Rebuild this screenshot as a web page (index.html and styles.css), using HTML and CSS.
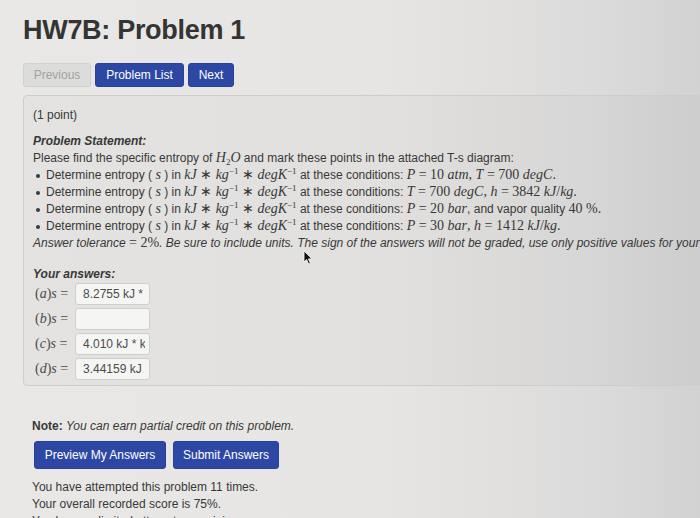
FILE: index.html
```html
<!DOCTYPE html>
<html>
<head>
<meta charset="utf-8">
<title>HW7B: Problem 1</title>
<link rel="stylesheet" href="styles.css">
</head>
<body>
<div class="page">
  <h1 class="title">HW7B: Problem 1</h1>
  <div class="nav">
    <span class="btn btn-disabled">Previous</span>
    <span class="btn btn-primary">Problem List</span>
    <span class="btn btn-primary">Next</span>
  </div>

  <div class="problem">
    <div class="points">(1 point)</div>
    <div class="stmt-head">Problem Statement:</div>
    <div class="line">Please find the specific entropy of <span class="m"><i>H</i><sub>2</sub><i>O</i></span> and mark these points in the attached T-s diagram:</div>
    <ul class="bullets">
      <li>Determine entropy ( <span class="m"><i>s</i></span> ) in <span class="m"><i>kJ</i> ∗ <i>kg</i><sup>−1</sup> ∗ <i>degK</i><sup>−1</sup></span> at these conditions: <span class="m"><i>P</i> = 10 <i>atm</i>, <i>T</i> = 700 <i>degC</i>.</span></li>
      <li>Determine entropy ( <span class="m"><i>s</i></span> ) in <span class="m"><i>kJ</i> ∗ <i>kg</i><sup>−1</sup> ∗ <i>degK</i><sup>−1</sup></span> at these conditions: <span class="m"><i>T</i> = 700 <i>degC</i>, <i>h</i> = 3842 <i>kJ</i>/<i>kg</i>.</span></li>
      <li>Determine entropy ( <span class="m"><i>s</i></span> ) in <span class="m"><i>kJ</i> ∗ <i>kg</i><sup>−1</sup> ∗ <i>degK</i><sup>−1</sup></span> at these conditions: <span class="m"><i>P</i> = 20 <i>bar</i></span>, and vapor quality <span class="m">40 %.</span></li>
      <li>Determine entropy ( <span class="m"><i>s</i></span> ) in <span class="m"><i>kJ</i> ∗ <i>kg</i><sup>−1</sup> ∗ <i>degK</i><sup>−1</sup></span> at these conditions: <span class="m"><i>P</i> = 30 <i>bar</i>, <i>h</i> = 1412 <i>kJ</i>/<i>kg</i>.</span></li>
    </ul>
    <div class="line tol"><em>Answer tolerance</em> <span class="m">= 2%</span><em>. Be sure to include units. The sign of the answers will not be graded, use only positive values for your answers.</em></div>

    <div class="answers-head">Your answers:</div>
    <div class="answers">
      <div class="ans-row"><span class="lbl m">(<i>a</i>)<i>s</i> =</span><input class="ans" type="text" readonly value="8.2755 kJ * kg^-1 * degK^-1"></div>
      <div class="ans-row"><span class="lbl m">(<i>b</i>)<i>s</i> =</span><input class="ans" type="text" readonly value=""></div>
      <div class="ans-row"><span class="lbl m">(<i>c</i>)<i>s</i> =</span><input class="ans" type="text" readonly value="4.010 kJ * kg^-1 * degK^-1"></div>
      <div class="ans-row"><span class="lbl m">(<i>d</i>)<i>s</i> =</span><input class="ans" type="text" readonly value="3.44159 kJ * kg^-1 * degK^-1"></div>
    </div>
  </div>

  <div class="footer">
    <div class="note"><b>Note:</b> <em>You can earn partial credit on this problem.</em></div>
    <div class="actions">
      <span class="btn btn-primary btn-lg">Preview My Answers</span>
      <span class="btn btn-primary btn-lg">Submit Answers</span>
    </div>
    <div class="status">
      <div>You have attempted this problem 11 times.</div>
      <div>Your overall recorded score is 75%.</div>
      <div>You have unlimited attempts remaining.</div>
    </div>
  </div>
</div>

<svg class="cursor" width="11" height="15" viewBox="0 0 11 15">
  <path d="M1 1 L1 12 L3.6 9.6 L5.6 14 L7.4 13.2 L5.4 8.9 L9 8.9 Z" fill="#111" stroke="#fff" stroke-width="0.8"/>
</svg>
</body>
</html>
```

FILE: styles.css
```css
html, body {
  margin: 0;
  padding: 0;
}
body {
  width: 700px;
  height: 518px;
  overflow: hidden;
  position: relative;
  background: linear-gradient(to right, #e9e8e6 0%, #e6e5e3 55%, #dcdbdb 85%, #d3d2d3 100%);
  font-family: "Liberation Sans", Arial, sans-serif;
  font-size: 12px;
  color: #383838;
}
.page {
  padding: 14px 0 0 23px;
  width: 760px;
}
.title {
  margin: 0;
  font-size: 27px;
  line-height: 32px;
  font-weight: bold;
  color: #343434;
  letter-spacing: -0.3px;
}
.nav {
  display: flex;
  gap: 4px;
  margin-top: 17px;
}
.btn {
  display: inline-flex;
  align-items: center;
  justify-content: center;
  height: 24px;
  padding: 0;
  border-radius: 3px;
  font-size: 12px;
  white-space: nowrap;
  box-sizing: border-box;
}
.btn-disabled {
  background: #dcdcdb;
  color: #a3a3a3;
  border: 1px solid #d0d0cf;
  width: 68px;
}
.btn-primary {
  background: #2d47a4;
  color: #fff;
  border: 1px solid #2a4099;
}
.nav .btn-primary:nth-child(2) { width: 89px; }
.nav .btn-primary:nth-child(3) { width: 46px; }

.problem {
  margin-top: 8px;
  border: 1px solid #cdcdcc;
  border-radius: 4px;
  background: rgba(0, 0, 0, 0.018);
  padding: 11px 9px 5px 9px;
  line-height: 17px;
}
.points {
  margin-bottom: 9px;
}
.stmt-head, .answers-head {
  font-weight: bold;
  font-style: italic;
}
.line {
  white-space: nowrap;
}
.tol em {
  font-style: italic;
}
.m {
  font-family: "Liberation Serif", "Times New Roman", serif;
  font-size: 14px;
  line-height: 1;
}
.m i {
  font-style: italic;
}
sup {
  font-size: 9px;
  line-height: 0;
  vertical-align: 5px;
}
sub {
  font-size: 9px;
  line-height: 0;
  vertical-align: -3px;
}
.bullets {
  list-style: none;
  margin: 0;
  padding: 0;
}
.bullets li {
  position: relative;
  padding-left: 13px;
  white-space: nowrap;
}
.bullets li::before {
  content: "";
  position: absolute;
  left: 3px;
  top: 7px;
  width: 4px;
  height: 4px;
  border-radius: 50%;
  background: #3a3a3a;
}
.answers-head {
  margin-top: 14px;
}
.answers {
  display: flex;
  flex-direction: column;
  gap: 3px;
  margin-top: 0;
}
.ans-row {
  display: flex;
  align-items: center;
  height: 22px;
}
.lbl {
  width: 42px;
  padding-left: 2px;
  box-sizing: border-box;
  color: #4a4a4a;
  font-size: 14px;
  white-space: nowrap;
}
.ans {
  width: 75px;
  height: 22px;
  box-sizing: border-box;
  border: 1px solid #cfcfcf;
  border-radius: 3px;
  background: #f5f5f4;
  padding: 0 4px 0 7px;
  margin: 0;
  font-family: "Liberation Sans", Arial, sans-serif;
  font-size: 12px;
  color: #4c4c4c;
  outline: none;
}

.footer {
  padding-left: 9px;
  line-height: 17px;
}
.note {
  margin-top: 32px;
}
.note b {
  font-weight: bold;
}
.actions {
  display: flex;
  gap: 7px;
  margin-top: 6px;
  padding-left: 2px;
}
.btn-lg {
  height: 28px;
}
.actions .btn-lg:nth-child(1) { width: 132px; }
.actions .btn-lg:nth-child(2) { width: 106px; }
.status {
  margin-top: 10px;
}
.cursor {
  position: absolute;
  left: 303px;
  top: 250px;
}
```
